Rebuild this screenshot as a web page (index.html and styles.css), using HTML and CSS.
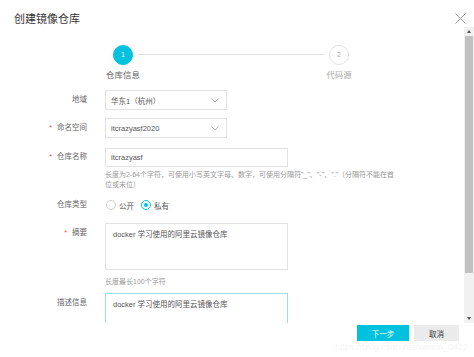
FILE: index.html
```html
<!DOCTYPE html>
<html lang="zh">
<head>
<meta charset="utf-8">
<title>创建镜像仓库</title>
<link rel="stylesheet" href="styles.css">
</head>
<body>
<div class="dialog">
  <header class="header">
    <h1 class="title">创建镜像仓库</h1>
    <span class="close" aria-label="close">
      <svg width="11" height="11" viewBox="0 0 11 11"><path d="M0.5 0.5L10.5 10.5M10.5 0.5L0.5 10.5" stroke="#9a9a9a" stroke-width="1" fill="none"/></svg>
    </span>
  </header>
  <div class="body">
    <div class="content">
      <div class="steps">
        <div class="step-circle active">1</div>
        <div class="step-line"></div>
        <div class="step-circle">2</div>
        <div class="step-label active">仓库信息</div>
        <div></div>
        <div class="step-label">代码源</div>
      </div>

      <div class="form">
        <div class="row row-region">
          <label class="label">地域</label>
          <div class="select w-122">
            <span>华东1（杭州）</span>
            <svg class="chev" width="8" height="5" viewBox="0 0 8 5"><path d="M0.5 0.5L4 4L7.5 0.5" stroke="#b5b5b5" fill="none"/></svg>
          </div>
        </div>
        <div class="row row-ns">
          <label class="label req">命名空间</label>
          <div class="select w-122">
            <span>itcrazyasf2020</span>
            <svg class="chev" width="8" height="5" viewBox="0 0 8 5"><path d="M0.5 0.5L4 4L7.5 0.5" stroke="#b5b5b5" fill="none"/></svg>
          </div>
        </div>
        <div class="row row-name">
          <label class="label req">仓库名称</label>
          <div class="input w-183">itcrazyasf</div>
        </div>
        <div class="hint hint-name">长度为2-64个字符，可使用小写英文字母、数字，可使用分隔符"_"、"-"、"."（分隔符不能在首<br>位或末位）</div>
        <div class="row row-type">
          <label class="label">仓库类型</label>
          <div class="radios">
            <span class="radio"></span><span class="radio-text">公开</span>
            <span class="radio checked"></span><span class="radio-text">私有</span>
          </div>
        </div>
        <div class="row row-top row-summary">
          <label class="label req">摘要</label>
          <div class="textarea w-183 h-47">docker 学习使用的阿里云镜像仓库</div>
        </div>
        <div class="hint hint-summary">长度最长100个字符</div>
        <div class="row row-top row-desc">
          <label class="label">描述信息</label>
          <div class="textarea focused w-183 h-80">docker 学习使用的阿里云镜像仓库</div>
        </div>
      </div>
    </div>
    <div class="scrollbar">
      <div class="sb-btn"><span class="tri up"></span></div>
      <div class="sb-track"><div class="sb-thumb"></div></div>
      <div class="sb-btn"><span class="tri down"></span></div>
    </div>
  </div>
  <footer class="footer">
    <button class="btn primary">下一步</button>
    <button class="btn">取消</button>
  </footer>
  <div class="watermark">https://blog.csdn.net/weixin_0422</div>
</div>
</body>
</html>
```
FILE: styles.css
```css
* { box-sizing: border-box; }
html, body { margin: 0; padding: 0; background: #fff; }
body {
  width: 474px;
  height: 357px;
  overflow: hidden;
  font-family: "Liberation Sans", "Noto Sans CJK SC", sans-serif;
  color: #555;
}
.dialog { position: relative; width: 474px; height: 357px; }

.header {
  height: 27px;
  display: flex;
  align-items: flex-start;
  justify-content: space-between;
  padding: 0 14px;
}
.title {
  margin: 12px 0 0;
  font-size: 11px;
  line-height: 14px;
  font-weight: normal;
  color: #333;
}
.close { margin-top: 13px; margin-right: -6px; display: block; line-height: 0; }

.body { display: flex; height: 296px; }
.content { flex: 1; overflow: hidden; }

/* steps */
.steps {
  display: grid;
  grid-template-columns: 40px 176px 40px;
  margin: 18px 0 0 103px;
}
.step-circle {
  justify-self: center;
  width: 20px; height: 20px;
  border-radius: 50%;
  border: 1px solid #e3e3e3;
  color: #aaa;
  font-size: 7px;
  line-height: 18px;
  text-align: center;
}
.step-circle.active { background: #00c1de; border-color: #00c1de; color: #fff; }
.step-line { height: 1px; background: #dedede; margin: 9px -5px 0; }
.step-label {
  justify-self: center;
  white-space: nowrap;
  margin-top: 4px;
  font-size: 8.5px;
  line-height: 12px;
  color: #666;
}
.step-label:last-child { color: #aaa; }

/* form */
.form { margin-top: 9px; }
.row { display: flex; align-items: center; gap: 18px; }
.row-top { align-items: flex-start; }
.label {
  width: 87px;
  flex: none;
  text-align: right;
  font-size: 7.5px;
  line-height: 20px;
  color: #666;
}
.label.req::before {
  content: "*";
  color: #e8474a;
  margin-right: 5px;
  font-size: 7px;
}
.select, .input, .textarea {
  border: 1px solid #e2e2e2;
  font-size: 7.5px;
  color: #555;
}
.select, .input {
  height: 20px;
  display: flex;
  align-items: center;
  padding: 0 5px;
}
.select { justify-content: space-between; padding-right: 7px; }
.w-122 { width: 122px; }
.w-183 { width: 183px; }
.input { height: 19px; }
.row-ns { margin-top: 8px; }
.row-name { margin-top: 9px; }

.hint {
  margin-left: 105px;
  width: 330px;
  white-space: nowrap;
  font-size: 7px;
  line-height: 10px;
  color: #999;
}
.hint-name { margin-top: 3px; }
.hint-summary { margin-top: 7px; }

.row-type { margin-top: 8px; height: 14px; }
.radios { display: flex; align-items: center; }
.radio {
  width: 10px; height: 10px;
  border-radius: 50%;
  border: 1px solid #cfcfcf;
  margin-left: 1px;
  display: inline-flex;
  align-items: center;
  justify-content: center;
}
.radio.checked { border-color: #00c1de; margin-left: 7px; }
.radio.checked::after {
  content: "";
  width: 4px; height: 4px;
  border-radius: 50%;
  background: #00c1de;
}
.radio-text { font-size: 7.5px; margin-left: 3px; color: #555; }

.textarea { padding: 6px 7px; line-height: 10px; }
.h-47 { height: 47px; }
.h-80 { height: 80px; }
.textarea.focused { border-color: #9adfeb; }
.row-summary { margin-top: 11px; }
.row-desc { margin-top: 6px; }

/* scrollbar */
.scrollbar {
  width: 10px;
  display: flex;
  flex-direction: column;
  background: #f1f1f1;
}
.sb-btn { height: 9px; display: flex; align-items: center; justify-content: center; }
.sb-track { flex: 1; }
.sb-thumb { height: 237px; background: #c1c1c1; margin: 0 1px; }
.tri { width: 0; height: 0; border-left: 2px solid transparent; border-right: 2px solid transparent; }
.tri.up { border-bottom: 3px solid #505050; }
.tri.down { border-top: 3px solid #505050; }

/* footer */
.footer {
  display: flex;
  justify-content: flex-end;
  gap: 5px;
  padding: 2px 15px 0 0;
}
.btn {
  height: 16px;
  border: none;
  padding: 0;
  font-family: inherit;
  font-size: 7.5px;
  color: #333;
  background: #ebebeb;
  width: 45px;
}
.btn.primary { background: #00c1de; color: #fff; width: 52px; }

.watermark {
  position: absolute;
  right: 6px;
  bottom: 5px;
  font-size: 9px;
  color: #f5f5f5;
}
```
